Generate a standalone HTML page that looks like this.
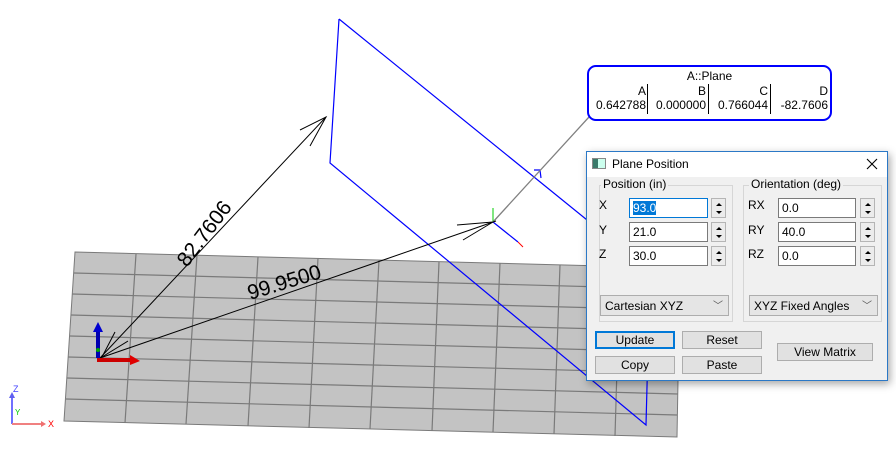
<!DOCTYPE html>
<html><head><meta charset="utf-8"><style>
body{margin:0;width:896px;height:450px;overflow:hidden;background:#fff;font-family:"Liberation Sans",sans-serif;position:relative}
.a{position:absolute;box-sizing:border-box}
.dlg{left:586px;top:151px;width:302px;height:230px;background:#f0f0f0;border:1px solid #2b78c6;box-shadow:2px 3px 8px rgba(0,0,0,.35)}
.tb{left:0;top:0;width:300px;height:25px;background:#fff}
.t{font-size:12px;color:#000;white-space:nowrap}
.grp{border:1px solid #d6d6d6}
.gl{background:#f0f0f0;padding:0 2px;font-size:12px}
.in{background:#fff;border:1px solid #7a7a7a;font-size:12px;padding:2px 0 0 3px;height:20px}
.sp{width:15px;height:20px;border:1px solid #b5b5b5;background:#ececec}
.sp:before{content:"";position:absolute;left:4px;top:4px;border:3px solid transparent;border-bottom:3px solid #000;border-top:0}
.sp:after{content:"";position:absolute;left:4px;top:12px;border:3px solid transparent;border-top:3px solid #000;border-bottom:0}
.cb{background:#e5e5e5;border:1px solid #adadad;font-size:12px;padding:3px 0 0 4px;height:21px}
.btn{background:#e1e1e1;border:1px solid #adadad;font-size:12px;text-align:center;line-height:16px}
</style></head><body>
<svg class="a" style="left:0;top:0" width="896" height="450">
<polygon points="75,252 680,268 677,437 64,421" fill="#c3c3c3" stroke="#7a7a7a"/>
<g stroke="#7a7a7a" stroke-width="1.2" fill="none">
<line x1="74" y1="273" x2="680" y2="289"/><line x1="72" y1="294" x2="680" y2="310"/><line x1="71" y1="315" x2="679" y2="331"/><line x1="70" y1="336" x2="679" y2="352"/><line x1="68" y1="357" x2="678" y2="373"/><line x1="67" y1="378" x2="678" y2="394"/><line x1="66" y1="399" x2="677" y2="415"/>
<line x1="136" y1="254" x2="125" y2="423"/><line x1="197" y1="255" x2="186" y2="424"/><line x1="258" y1="257" x2="248" y2="426"/><line x1="318" y1="258" x2="309" y2="428"/><line x1="379" y1="260" x2="370" y2="429"/><line x1="439" y1="262" x2="432" y2="431"/><line x1="500" y1="263" x2="493" y2="432"/><line x1="560" y1="265" x2="554" y2="434"/><line x1="620" y1="266" x2="615" y2="436"/>
</g>
<g stroke="#0000ff" fill="none" stroke-width="1.2">
<polyline points="339,19 330,163 646,425 650,271 339,19"/>
<polyline points="534,170 540,170 541,178"/>
<line x1="493" y1="222" x2="518" y2="242"/>
</g>
<line x1="518" y1="242" x2="523" y2="247" stroke="#f00"/>
<line x1="493" y1="222" x2="493" y2="208" stroke="#0c0"/>
<line x1="493" y1="222" x2="589" y2="117" stroke="#808080" stroke-width="1.3"/>
<g stroke="#000" fill="none" stroke-width="1">
<line x1="100" y1="358" x2="326" y2="117"/><polyline points="300,130 326,117 310,146"/>
<line x1="100" y1="358" x2="496" y2="221"/><polyline points="457,225 493,222 463,240"/>
<line x1="102" y1="357" x2="115" y2="332"/><line x1="102" y1="357" x2="128" y2="341"/>
</g>
<text x="0" y="0" font-size="21" font-family="Liberation Sans" transform="translate(187,268) rotate(-53)">82.7606</text>
<text x="0" y="0" font-size="21" font-family="Liberation Sans" transform="translate(250,300) rotate(-17)">99.9500</text>
<line x1="98" y1="358" x2="98" y2="330" stroke="#0000b0" stroke-width="4"/><polygon points="93,332 98,322 103,332" fill="#0000d0"/>
<line x1="97" y1="360" x2="132" y2="360" stroke="#c00" stroke-width="4"/><polygon points="130,355 140,361 130,365" fill="#e00000"/>
<circle cx="98" cy="350" r="2" fill="#0a0"/>
<line x1="12" y1="424" x2="12" y2="397" stroke="#7070ff" stroke-width="2"/><polygon points="9,398 12,392 15,398" fill="#6060f0"/>
<line x1="12" y1="424" x2="42" y2="424" stroke="#f08080" stroke-width="2"/><polygon points="41,421 46,424 41,427" fill="#f07070"/>
<text x="13" y="392" font-size="9" fill="#4040ff" font-family="Liberation Sans">Z</text>
<text x="15" y="415" font-size="8" fill="#0c0" font-family="Liberation Sans">Y</text>
<text x="48" y="427" font-size="9" fill="#f00" font-family="Liberation Sans">X</text>
</svg>
<div class="a" style="left:587px;top:65px;width:245px;height:56px;border:2px solid #0000ff;border-radius:9px;background:#fff"></div>
<div class="a t" style="left:587px;top:69px;width:245px;text-align:center">A::Plane</div>
<div class="a" style="left:647px;top:84px;width:1px;height:30px;background:#000"></div>
<div class="a" style="left:708px;top:84px;width:1px;height:30px;background:#000"></div>
<div class="a" style="left:770px;top:84px;width:1px;height:30px;background:#000"></div>
<div class="a t" style="left:590px;top:84px;width:56px;text-align:right;line-height:14px">A<br>0.642788</div>
<div class="a t" style="left:650px;top:84px;width:56px;text-align:right;line-height:14px">B<br>0.000000</div>
<div class="a t" style="left:711px;top:84px;width:57px;text-align:right;line-height:14px">C<br>0.766044</div>
<div class="a t" style="left:772px;top:84px;width:56px;text-align:right;line-height:14px">D<br>-82.7606</div>

<div class="a dlg">
<div class="a tb"></div>
<div class="a" style="left:5px;top:6px;width:14px;height:11px;border:1px solid #888;background:linear-gradient(90deg,#3a7a6a 40%,#cfe 40%)"></div>
<div class="a t" style="left:25px;top:5px">Plane Position</div>
<svg class="a" style="left:279px;top:6px" width="12" height="12"><path d="M1 1L11 11M11 1L1 11" stroke="#000" stroke-width="1.1"/></svg>
<div class="a grp" style="left:12px;top:33px;width:134px;height:137px"></div>
<div class="a gl" style="left:14px;top:25px">Position (in)</div>
<div class="a grp" style="left:156px;top:33px;width:139px;height:137px"></div>
<div class="a gl" style="left:162px;top:25px">Orientation (deg)</div>
<div class="a t" style="left:12px;top:46px">X</div><div class="a t" style="left:12px;top:71px">Y</div><div class="a t" style="left:12px;top:95px">Z</div>
<div class="a in" style="left:42px;top:46px;width:79px;border-color:#0078d7"><span style="background:#0078d7;color:#fff">93.0</span></div>
<div class="a in" style="left:42px;top:70px;width:79px">21.0</div>
<div class="a in" style="left:42px;top:94px;width:79px">30.0</div>
<div class="a sp" style="left:124px;top:46px"></div><div class="a sp" style="left:124px;top:70px"></div><div class="a sp" style="left:124px;top:94px"></div>
<div class="a t" style="left:161px;top:46px">RX</div><div class="a t" style="left:161px;top:71px">RY</div><div class="a t" style="left:161px;top:95px">RZ</div>
<div class="a in" style="left:191px;top:46px;width:78px">0.0</div>
<div class="a in" style="left:191px;top:70px;width:78px">40.0</div>
<div class="a in" style="left:191px;top:94px;width:78px">0.0</div>
<div class="a sp" style="left:273px;top:46px"></div><div class="a sp" style="left:273px;top:70px"></div><div class="a sp" style="left:273px;top:94px"></div>
<div class="a cb" style="left:13px;top:143px;width:129px">Cartesian XYZ<span style="position:absolute;right:5px;top:1px;font-size:10px;color:#555">﹀</span></div>
<div class="a cb" style="left:162px;top:143px;width:129px">XYZ Fixed Angles<span style="position:absolute;right:5px;top:1px;font-size:10px;color:#555">﹀</span></div>
<div class="a btn" style="left:8px;top:179px;width:80px;height:18px;border:2px solid #0078d7;line-height:14px">Update</div>
<div class="a btn" style="left:95px;top:179px;width:80px;height:18px">Reset</div>
<div class="a btn" style="left:8px;top:204px;width:80px;height:18px">Copy</div>
<div class="a btn" style="left:95px;top:204px;width:80px;height:18px">Paste</div>
<div class="a btn" style="left:190px;top:191px;width:96px;height:18px">View Matrix</div>
</div>
</body></html>
